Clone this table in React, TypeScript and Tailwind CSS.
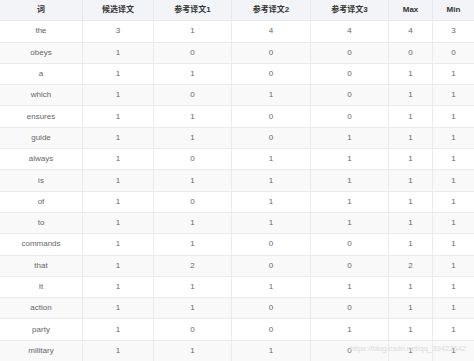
const headers = ['词', '候选译文', '参考译文1', '参考译文2', '参考译文3', 'Max', 'Min'];

const rows: (string | number)[][] = [
  ['the', 3, 1, 4, 4, 4, 3],
  ['obeys', 1, 0, 0, 0, 0, 0],
  ['a', 1, 1, 0, 0, 1, 1],
  ['which', 1, 0, 1, 0, 1, 1],
  ['ensures', 1, 1, 0, 0, 1, 1],
  ['guide', 1, 1, 0, 1, 1, 1],
  ['always', 1, 0, 1, 1, 1, 1],
  ['is', 1, 1, 1, 1, 1, 1],
  ['of', 1, 0, 1, 1, 1, 1],
  ['to', 1, 1, 1, 1, 1, 1],
  ['commands', 1, 1, 0, 0, 1, 1],
  ['that', 1, 2, 0, 0, 2, 1],
  ['It', 1, 1, 1, 1, 1, 1],
  ['action', 1, 1, 0, 0, 1, 1],
  ['party', 1, 0, 0, 1, 1, 1],
  ['military', 1, 1, 1, 0, 1, 1],
];

const cols = 'grid grid-cols-[83px_71px_78px_79px_78px_44px_41px]';

export default function App() {
  return (
    <div className="relative w-[474px] h-[361px] overflow-hidden bg-white font-['Liberation_Sans','Noto_Sans_CJK_SC',sans-serif] text-[8px]">
      <div className="flex flex-col h-full">
        {/* header */}
        <div className={`${cols} flex-1 bg-[#f2f4f7] border-b border-[#e6e8eb]`}>
          {headers.map((h, i) => (
            <div
              key={i}
              className="flex items-center justify-center font-bold text-[#333] border-r border-[#e6e8eb] last:border-r-0"
            >
              {h}
            </div>
          ))}
        </div>
        {rows.map((r, ri) => (
          <div
            key={ri}
            className={`${cols} flex-1 border-b border-[#ebebeb] last:border-b-0 ${ri % 2 === 1 ? 'bg-[#f9f9f9]' : 'bg-white'}`}
          >
            {r.map((c, ci) => (
              <div
                key={ci}
                className="flex items-center justify-center text-[#666] border-r border-[#ebebeb] last:border-r-0"
              >
                {c}
              </div>
            ))}
          </div>
        ))}
      </div>
      {/* csdn watermark */}
      <div className="absolute right-[8px] bottom-[6px] text-[8px] text-[#dcdcdc] tracking-tight">
        https://blog.csdn.net/qq_39422642
      </div>
    </div>
  );
}
